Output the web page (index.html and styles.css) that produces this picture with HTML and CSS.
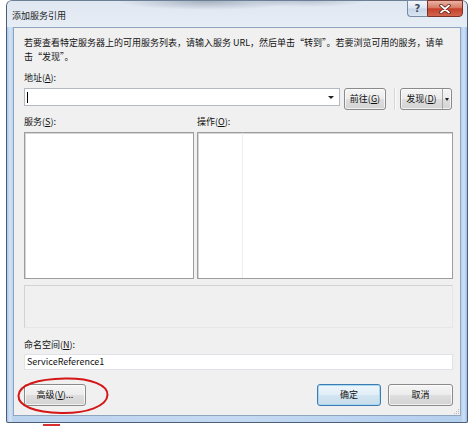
FILE: index.html
```html
<!DOCTYPE html>
<html lang="zh-CN">
<head>
<meta charset="utf-8">
<title>添加服务引用</title>
<link rel="stylesheet" href="styles.css">
</head>
<body>
<div class="window">
  <div class="titlebar">
    <span class="title">添加服务引用</span>
    <div class="caption-btns">
      <div class="cbtn help">?</div>
      <div class="cbtn close">
        <svg width="14" height="10" viewBox="0 0 14 10"><path d="M3 1.5 L11 8.5 M11 1.5 L3 8.5" stroke="#5a1a12" stroke-width="3.4" stroke-linecap="round"/><path d="M3 1.5 L11 8.5 M11 1.5 L3 8.5" stroke="#ffffff" stroke-width="1.8" stroke-linecap="round"/></svg>
      </div>
    </div>
  </div>
  <div class="client">
    <p class="intro">若要查看特定服务器上的可用服务列表，请输入服务 URL，然后单击“转到”。若要浏览可用的服务，请单<br>击“发现”。</p>
    <div class="lbl lbl-addr">地址(<u>A</u>):</div>
    <div class="addr-row">
      <div class="combo"><span class="caret"></span><span class="combo-arrow"></span></div>
      <div class="btn go">前往(<u>G</u>)</div>
      <span class="sep"></span>
      <div class="btn split"><span class="split-main">发现(<u>D</u>)</span><span class="split-drop"><span class="tri"></span></span></div>
    </div>
    <div class="lists">
      <div class="col col-services">
        <div class="lbl">服务(<u>S</u>):</div>
        <div class="listbox"></div>
      </div>
      <div class="col col-ops">
        <div class="lbl">操作(<u>O</u>):</div>
        <div class="listbox"><div class="lv-col"></div></div>
      </div>
    </div>
    <div class="desc"></div>
    <div class="lbl lbl-ns">命名空间(<u>N</u>):</div>
    <div class="textbox">ServiceReference1</div>
    <div class="footer">
      <div class="btn adv">高级(<u>V</u>)...</div>
      <div class="btn ok">确定</div>
      <div class="btn cancel">取消</div>
    </div>
    <svg class="mark" width="96" height="40" viewBox="0 0 96 40"><path d="M50 2.5 C76 2 93 9 92.5 19 C92 30 72 37.5 46 37 C20 36.5 3 30 3.5 19.5 C4 9 22 3 50 2.5 Z" fill="none" stroke="#d41616" stroke-width="2"/></svg>
    <svg class="grip" width="7" height="7" viewBox="0 0 7 7"><g fill="#b8b8b8"><rect x="5" y="1" width="1" height="1"/><rect x="3" y="3" width="1" height="1"/><rect x="5" y="3" width="1" height="1"/><rect x="1" y="5" width="1" height="1"/><rect x="3" y="5" width="1" height="1"/><rect x="5" y="5" width="1" height="1"/></g></svg>
  </div>
</div>
<div class="stray"></div>
</body>
</html>
```

FILE: styles.css
```css
* { box-sizing: border-box; }

html, body {
  margin: 0;
  padding: 0;
  background: #ffffff;
}

body {
  width: 474px;
  height: 427px;
  overflow: hidden;
  font-family: "Noto Sans CJK SC", "Noto Sans", sans-serif;
  font-size: 9px;
  color: #111111;
}

.window {
  margin-left: 6px;
  width: 462px;
  border: 1px solid #4b5e78;
  border-top-color: #6d7f96;
  border-radius: 6px 6px 2px 2px;
  background: linear-gradient(to right, #a9c6ea 0px, #d4e4f6 3px, #bcd3ee 6px, #c5daf2 50%, #b4cfee calc(100% - 6px), #cfe1f6 calc(100% - 3px), #9fc0e8 100%);
  padding: 0 6px 6px 6px;
}

.titlebar {
  height: 26px;
  margin: 0 -6px;
  padding: 0 4px 0 5px;
  display: flex;
  align-items: flex-start;
  border-radius: 5px 5px 0 0;
  background:
    radial-gradient(ellipse 90px 9px at 200px 0px, rgba(95, 108, 128, 0.45), rgba(95, 108, 128, 0) 100%),
    radial-gradient(ellipse 60px 6px at 300px 0px, rgba(120, 130, 150, 0.35), rgba(120, 130, 150, 0) 100%),
    linear-gradient(#dfe7f1, #e7edf5);
}

.title {
  margin-top: 8px;
  line-height: 14px;
  color: #1a1a1a;
}

.caption-btns {
  margin-left: auto;
  display: flex;
}

.cbtn {
  height: 17px;
  margin-top: -1px;
  display: flex;
  align-items: center;
  justify-content: center;
}

.help {
  width: 20px;
  border: 1px solid #7a8aa2;
  border-right: none;
  border-radius: 0 0 0 4px;
  background: linear-gradient(#f4f7fb 0%, #dce6f2 48%, #c6d5e8 52%, #d9e5f2 100%);
  color: #3d4a5c;
  font-family: "DejaVu Sans", sans-serif;
  font-size: 10px;
  font-weight: bold;
  line-height: 1;
}

.close {
  width: 36px;
  border: 1px solid #7c3226;
  border-radius: 0 0 4px 0;
  background: linear-gradient(#eab3a5 0%, #d77a64 45%, #c4402a 52%, #d2654f 100%);
}

.client {
  position: relative;
  border: 1px solid #8fa4bf;
  background: #f0f0f0;
  padding: 8px 7px 9px 10px;
}

.intro {
  margin: 0;
  line-height: 14px;
  white-space: nowrap;
}

.lbl {
  line-height: 14px;
  height: 14px;
}

.lbl-addr { margin-top: 7px; }

.addr-row {
  margin-top: 3px;
  height: 22px;
  display: flex;
  align-items: flex-start;
}

.combo {
  width: 316px;
  height: 18px;
  border: 1px solid #b4b9c2;
  background: #ffffff;
  display: flex;
  align-items: center;
  padding: 0 5px 0 2px;
}

.caret {
  width: 1px;
  height: 11px;
  background: #000;
}

.combo-arrow {
  margin-left: auto;
  width: 0;
  height: 0;
  border-left: 3px solid transparent;
  border-right: 3px solid transparent;
  border-top: 3px solid #222;
}

.btn {
  height: 22px;
  border: 1px solid #8a8a8a;
  border-radius: 3px;
  background: linear-gradient(#f5f5f5 0%, #ececec 48%, #dedede 52%, #d3d3d3 100%);
  box-shadow: inset 0 0 0 1px rgba(255, 255, 255, 0.7);
  display: flex;
  align-items: center;
  justify-content: center;
  line-height: 14px;
  color: #111111;
}

.go {
  width: 42px;
  margin-left: 4px;
}

.sep {
  width: 1px;
  height: 22px;
  margin-left: 8px;
  background: #d6d6d6;
  box-shadow: 1px 0 0 #fafafa;
}

.split {
  width: 52px;
  margin-left: 5px;
  justify-content: flex-start;
}

.split-main {
  width: 41px;
  text-align: center;
}

.split-drop {
  flex: 1;
  height: 100%;
  border-left: 1px solid #a5a5a5;
  display: flex;
  align-items: center;
  justify-content: center;
}

.tri {
  width: 0;
  height: 0;
  border-left: 2.5px solid transparent;
  border-right: 2.5px solid transparent;
  border-top: 3px solid #222;
}

.lists {
  margin-top: 5px;
  display: flex;
  gap: 3px;
}

.col-services { width: 170px; }
.col-ops { width: 256px; }

.listbox {
  margin-top: 3px;
  height: 147px;
  background: #ffffff;
  border: 1px solid #9d9d9d;
  box-shadow: inset 1px 1px 0 #d6d6d6;
  display: flex;
}

.lv-col {
  width: 45px;
  height: 100%;
  border-right: 1px solid #ededed;
}

.desc {
  margin-top: 6px;
  height: 43px;
  border: 1px solid #d2d2d2;
  border-right-color: #e6e6e6;
  border-bottom-color: #e6e6e6;
  background: #f0f0f0;
}

.lbl-ns { margin-top: 10px; }

.textbox {
  margin-top: 2px;
  height: 16px;
  border: 1px solid #dfe2e6;
  background: #ffffff;
  line-height: 14px;
  padding-left: 2px;
}

.footer {
  margin-top: 14px;
  display: flex;
}

.footer .btn {
  height: 22px;
}

.adv {
  width: 62px;
}

.ok {
  width: 64px;
  margin-left: auto;
  border-color: #3d7cb0;
  background: linear-gradient(#eef6fb 0%, #e1eef7 48%, #d2e5f2 52%, #c8dcea 100%);
  box-shadow: inset 0 0 0 1px #a9d8f2;
}

.cancel {
  width: 65px;
  margin-left: 7px;
}

.mark {
  position: absolute;
  left: 1px;
  top: 348px;
}

.grip {
  position: absolute;
  right: 0;
  bottom: 0;
}

.stray {
  width: 17px;
  height: 2px;
  margin: 1px 0 0 43px;
  background: #d83030;
}
```
